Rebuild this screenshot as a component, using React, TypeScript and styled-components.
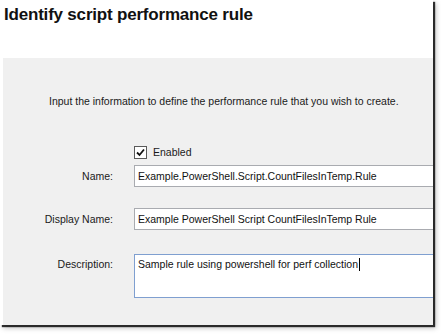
import React from "react";
import styled, { createGlobalStyle } from "styled-components";

const Global = createGlobalStyle`
  html, body { margin: 0; padding: 0; background: #ffffff; }
  body { font-family: "Liberation Sans", Arial, sans-serif; }
`;

const Frame = styled.div`
  width: 441px;
  height: 334px;
  overflow: hidden;
  background: #ffffff;
`;

const Window = styled.div`
  width: 433px;
  height: 325px;
  background: #ffffff;
  display: flex;
  flex-direction: column;
  overflow: hidden;
  box-shadow: 2px 2px 1px rgba(0, 0, 0, 0.8), 3px 3px 5px rgba(0, 0, 0, 0.25);
`;

const Header = styled.div`
  height: 58px;
  flex: none;
  padding: 4px 0 0 4px;
  box-sizing: border-box;
`;

const Title = styled.h1`
  margin: 0;
  font-family: "Liberation Sans", Arial, sans-serif;
  font-weight: bold;
  font-size: 17px;
  line-height: 22px;
  color: #111111;
  letter-spacing: -0.2px;
`;

const Panel = styled.div`
  flex: 1;
  margin-left: 3px;
  background: #f0f0f0;
  padding-top: 37px;
  display: flex;
  flex-direction: column;
`;

const Intro = styled.div`
  padding-left: 46px;
  font-size: 10.5px;
  line-height: 13px;
  color: #1a1a1a;
`;

const Row = styled.div<{ $top: number; $align?: string }>`
  display: flex;
  align-items: ${(p) => p.$align || "center"};
  margin-top: ${(p) => p.$top}px;
  gap: 21px;
`;

const Label = styled.div<{ $padTop?: number }>`
  width: 110px;
  flex: none;
  text-align: right;
  font-size: 10.5px;
  line-height: 13px;
  color: #1a1a1a;
  padding-top: ${(p) => p.$padTop || 0}px;
`;

const Field = styled.div<{ $height: number; $focused?: boolean }>`
  flex: none;
  width: 320px;
  height: ${(p) => p.$height}px;
  box-sizing: border-box;
  background: #ffffff;
  border: 1px solid ${(p) => (p.$focused ? "#7f9fd0" : "#a9abb0")};
  padding: ${(p) => (p.$focused ? "3px 3px" : "0 3px")};
  display: flex;
  align-items: ${(p) => (p.$focused ? "flex-start" : "center")};
  font-size: 10.5px;
  line-height: 13px;
  color: #111111;
  white-space: nowrap;
`;

const Caret = styled.span`
  display: inline-block;
  width: 1px;
  height: 13px;
  background: #000;
  margin-left: 1px;
  vertical-align: top;
`;

const CheckRow = styled.label`
  display: flex;
  align-items: center;
  gap: 6px;
  font-size: 10.5px;
  line-height: 13px;
  color: #1a1a1a;
`;

const Box = styled.span`
  width: 13px;
  height: 13px;
  box-sizing: border-box;
  border: 1px solid #5a5a5a;
  background: #ffffff;
  display: flex;
  align-items: center;
  justify-content: center;
`;

const Spacer = styled.div`
  width: 110px;
  flex: none;
`;

export default function App() {
  return (
    <>
      <Global />
      <Frame>
        <Window>
          <Header>
            <Title>Identify script performance rule</Title>
          </Header>
          <Panel>
            <Intro>Input the information to define the performance rule that you wish to create.</Intro>
            <Row $top={38}>
              <Spacer />
              <CheckRow>
                <Box>
                  <svg width="9" height="9" viewBox="0 0 9 9">
                    <path d="M1 4.5 L3.5 7 L8 1.5" fill="none" stroke="#111" strokeWidth="1.8" />
                  </svg>
                </Box>
                Enabled
              </CheckRow>
            </Row>
            <Row $top={6}>
              <Label>Name:</Label>
              <Field $height={22}>Example.PowerShell.Script.CountFilesInTemp.Rule</Field>
            </Row>
            <Row $top={21}>
              <Label>Display Name:</Label>
              <Field $height={22}>Example PowerShell Script CountFilesInTemp Rule</Field>
            </Row>
            <Row $top={24} $align="flex-start">
              <Label $padTop={4}>Description:</Label>
              <Field $height={44} $focused>
                <span>Sample rule using powershell for perf collection</span>
                <Caret />
              </Field>
            </Row>
          </Panel>
        </Window>
      </Frame>
    </>
  );
}
